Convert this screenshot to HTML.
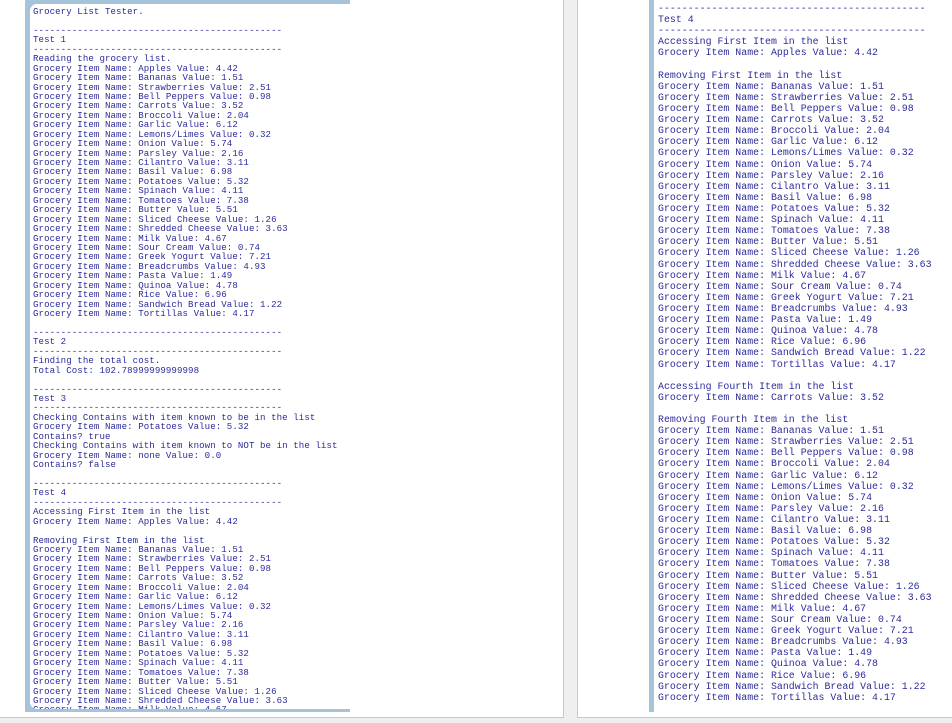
<!DOCTYPE html>
<html><head><meta charset="utf-8"><style>
html,body{margin:0;padding:0;width:952px;height:723px;overflow:hidden;background:#efefef;position:relative}
.pg{position:absolute;top:-2px;background:#fff;border:1px solid #c8c8c8}
.t{position:absolute;margin:0;font-family:"Liberation Mono","Courier New",monospace;color:#2b2b9b;white-space:pre;font-weight:normal}
#L{left:3px;top:3px;font-size:9.1px;line-height:9.44px;letter-spacing:0.08px}
#R{left:658px;top:3px;font-size:9.9px;line-height:11.11px;letter-spacing:0.02px}
</style></head><body>
<div class="pg" style="left:-1px;width:563px;height:718px"></div>
<div class="pg" style="left:577px;width:380px;height:718px"></div>
<div style="position:absolute;left:25px;top:0;width:325px;height:712px;background:#a5c4da"></div>
<div style="position:absolute;left:30px;top:4px;width:320px;height:705px;background:#fff;border-radius:7px 0 0 7px;overflow:hidden">
<pre class="t" id="L">Grocery List Tester.

---------------------------------------------
Test 1
---------------------------------------------
Reading the grocery list.
Grocery Item Name: Apples Value: 4.42
Grocery Item Name: Bananas Value: 1.51
Grocery Item Name: Strawberries Value: 2.51
Grocery Item Name: Bell Peppers Value: 0.98
Grocery Item Name: Carrots Value: 3.52
Grocery Item Name: Broccoli Value: 2.04
Grocery Item Name: Garlic Value: 6.12
Grocery Item Name: Lemons/Limes Value: 0.32
Grocery Item Name: Onion Value: 5.74
Grocery Item Name: Parsley Value: 2.16
Grocery Item Name: Cilantro Value: 3.11
Grocery Item Name: Basil Value: 6.98
Grocery Item Name: Potatoes Value: 5.32
Grocery Item Name: Spinach Value: 4.11
Grocery Item Name: Tomatoes Value: 7.38
Grocery Item Name: Butter Value: 5.51
Grocery Item Name: Sliced Cheese Value: 1.26
Grocery Item Name: Shredded Cheese Value: 3.63
Grocery Item Name: Milk Value: 4.67
Grocery Item Name: Sour Cream Value: 0.74
Grocery Item Name: Greek Yogurt Value: 7.21
Grocery Item Name: Breadcrumbs Value: 4.93
Grocery Item Name: Pasta Value: 1.49
Grocery Item Name: Quinoa Value: 4.78
Grocery Item Name: Rice Value: 6.96
Grocery Item Name: Sandwich Bread Value: 1.22
Grocery Item Name: Tortillas Value: 4.17

---------------------------------------------
Test 2
---------------------------------------------
Finding the total cost.
Total Cost: 102.78999999999998

---------------------------------------------
Test 3
---------------------------------------------
Checking Contains with item known to be in the list
Grocery Item Name: Potatoes Value: 5.32
Contains? true
Checking Contains with item known to NOT be in the list
Grocery Item Name: none Value: 0.0
Contains? false

---------------------------------------------
Test 4
---------------------------------------------
Accessing First Item in the list
Grocery Item Name: Apples Value: 4.42

Removing First Item in the list
Grocery Item Name: Bananas Value: 1.51
Grocery Item Name: Strawberries Value: 2.51
Grocery Item Name: Bell Peppers Value: 0.98
Grocery Item Name: Carrots Value: 3.52
Grocery Item Name: Broccoli Value: 2.04
Grocery Item Name: Garlic Value: 6.12
Grocery Item Name: Lemons/Limes Value: 0.32
Grocery Item Name: Onion Value: 5.74
Grocery Item Name: Parsley Value: 2.16
Grocery Item Name: Cilantro Value: 3.11
Grocery Item Name: Basil Value: 6.98
Grocery Item Name: Potatoes Value: 5.32
Grocery Item Name: Spinach Value: 4.11
Grocery Item Name: Tomatoes Value: 7.38
Grocery Item Name: Butter Value: 5.51
Grocery Item Name: Sliced Cheese Value: 1.26
Grocery Item Name: Shredded Cheese Value: 3.63
Grocery Item Name: Milk Value: 4.67</pre>
</div>
<div style="position:absolute;left:25px;top:709px;width:325px;height:3px;background:#a5c4da"></div>
<div style="position:absolute;left:649px;top:0;width:5px;height:712px;background:#a5c4da"></div>
<pre class="t" id="R">---------------------------------------------
Test 4
---------------------------------------------
Accessing First Item in the list
Grocery Item Name: Apples Value: 4.42

Removing First Item in the list
Grocery Item Name: Bananas Value: 1.51
Grocery Item Name: Strawberries Value: 2.51
Grocery Item Name: Bell Peppers Value: 0.98
Grocery Item Name: Carrots Value: 3.52
Grocery Item Name: Broccoli Value: 2.04
Grocery Item Name: Garlic Value: 6.12
Grocery Item Name: Lemons/Limes Value: 0.32
Grocery Item Name: Onion Value: 5.74
Grocery Item Name: Parsley Value: 2.16
Grocery Item Name: Cilantro Value: 3.11
Grocery Item Name: Basil Value: 6.98
Grocery Item Name: Potatoes Value: 5.32
Grocery Item Name: Spinach Value: 4.11
Grocery Item Name: Tomatoes Value: 7.38
Grocery Item Name: Butter Value: 5.51
Grocery Item Name: Sliced Cheese Value: 1.26
Grocery Item Name: Shredded Cheese Value: 3.63
Grocery Item Name: Milk Value: 4.67
Grocery Item Name: Sour Cream Value: 0.74
Grocery Item Name: Greek Yogurt Value: 7.21
Grocery Item Name: Breadcrumbs Value: 4.93
Grocery Item Name: Pasta Value: 1.49
Grocery Item Name: Quinoa Value: 4.78
Grocery Item Name: Rice Value: 6.96
Grocery Item Name: Sandwich Bread Value: 1.22
Grocery Item Name: Tortillas Value: 4.17

Accessing Fourth Item in the list
Grocery Item Name: Carrots Value: 3.52

Removing Fourth Item in the list
Grocery Item Name: Bananas Value: 1.51
Grocery Item Name: Strawberries Value: 2.51
Grocery Item Name: Bell Peppers Value: 0.98
Grocery Item Name: Broccoli Value: 2.04
Grocery Item Name: Garlic Value: 6.12
Grocery Item Name: Lemons/Limes Value: 0.32
Grocery Item Name: Onion Value: 5.74
Grocery Item Name: Parsley Value: 2.16
Grocery Item Name: Cilantro Value: 3.11
Grocery Item Name: Basil Value: 6.98
Grocery Item Name: Potatoes Value: 5.32
Grocery Item Name: Spinach Value: 4.11
Grocery Item Name: Tomatoes Value: 7.38
Grocery Item Name: Butter Value: 5.51
Grocery Item Name: Sliced Cheese Value: 1.26
Grocery Item Name: Shredded Cheese Value: 3.63
Grocery Item Name: Milk Value: 4.67
Grocery Item Name: Sour Cream Value: 0.74
Grocery Item Name: Greek Yogurt Value: 7.21
Grocery Item Name: Breadcrumbs Value: 4.93
Grocery Item Name: Pasta Value: 1.49
Grocery Item Name: Quinoa Value: 4.78
Grocery Item Name: Rice Value: 6.96
Grocery Item Name: Sandwich Bread Value: 1.22
Grocery Item Name: Tortillas Value: 4.17</pre>
</body></html>
